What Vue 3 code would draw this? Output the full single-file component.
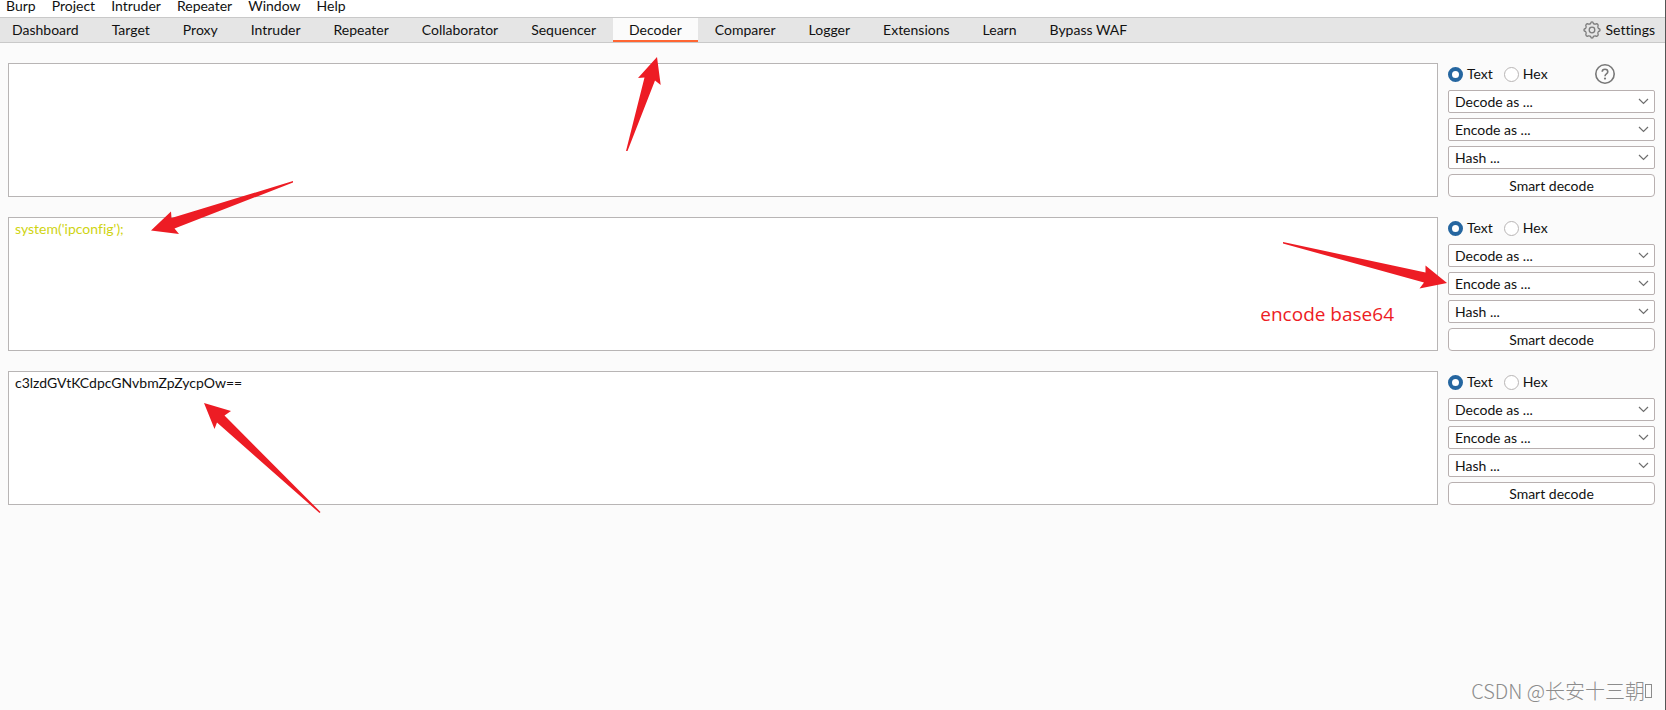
<script setup>
import { ref } from 'vue'

const menus = ['Burp', 'Project', 'Intruder', 'Repeater', 'Window', 'Help']
const tabs = ['Dashboard', 'Target', 'Proxy', 'Intruder', 'Repeater', 'Collaborator', 'Sequencer', 'Decoder', 'Comparer', 'Logger', 'Extensions', 'Learn', 'Bypass WAF']
const active = ref('Decoder')
const choices = ['Decode as ...', 'Encode as ...', 'Hash ...']
const rows = ref([
  { id: 'a', text: '', mode: 'text', help: true },
  { id: 'b', text: "system('ipconfig');", mode: 'text', tinted: true },
  { id: 'c', text: 'c3lzdGVtKCdpcGNvbmZpZycpOw==', mode: 'text' },
])
</script>

<template>
  <div class="window">
    <nav class="menubar" aria-label="Menu">
      <button v-for="m in menus" :key="m" type="button" class="menu">{{ m }}</button>
    </nav>
    <div class="tabbar">
      <div class="tabs" role="tablist">
        <button
          v-for="t in tabs" :key="t" type="button" role="tab" class="tab"
          :class="{ active: t === active }" :aria-selected="t === active" @click="active = t"
        >{{ t }}</button>
      </div>
      <button type="button" class="settings">
        <svg width="18" height="18" viewBox="0 0 18 18" fill="none" stroke="#7b7b7b" stroke-width="1.3" stroke-linejoin="round" aria-hidden="true">
          <path d="M7.6 2.6Q7.8 .9 9 .9T10.4 2.6Q11.6 3.3 12.5 3.1 13.8 2.3 14.7 3.2T14.9 5.4Q14.7 6.4 15.4 7.5 17.1 7.7 17.1 9T15.4 10.5Q14.7 11.5 14.9 12.6 15.7 13.9 14.7 14.8T12.5 14.9Q11.5 14.7 10.4 15.4 10.2 17.1 9 17.1T7.6 15.4Q6.5 14.7 5.5 14.9 4.2 15.7 3.3 14.8T3.1 12.6Q3.3 11.5 2.6 10.5 .9 10.2 .9 9T2.6 7.5Q3.3 6.5 3.1 5.4 2.3 4.1 3.3 3.2T5.5 3.1Q6.5 3.3 7.6 2.6Z" />
          <circle cx="9" cy="9" r="2.8" />
        </svg>
        <span>Settings</span>
      </button>
    </div>

    <main class="decoder">
      <section v-for="row in rows" :key="row.id" class="row">
        <textarea v-model="row.text" class="data" :class="{ tinted: row.tinted }" aria-label="Data" spellcheck="false"></textarea>
        <div class="controls">
          <div class="modes">
            <label class="mode"><input v-model="row.mode" type="radio" value="text" :name="'mode-' + row.id">Text</label>
            <label class="mode"><input v-model="row.mode" type="radio" value="hex" :name="'mode-' + row.id">Hex</label>
            <button v-if="row.help" type="button" class="help" aria-label="Help">
              <svg width="20" height="20" viewBox="0 0 20 20" fill="none" stroke="#777" aria-hidden="true">
                <circle cx="10" cy="10" r="9.2" stroke-width="1.6" />
                <path d="M7.2 7.8C7.2 4.3 12.8 4.3 12.8 7.8 12.8 10 10 9.8 10 12.2" stroke-width="1.6" />
                <circle cx="10" cy="14.6" r="1.1" fill="#777" stroke="none" />
              </svg>
            </button>
          </div>
          <div v-for="c in choices" :key="c" class="pick">
            <select :aria-label="c"><option>{{ c }}</option></select>
            <svg class="chevron" width="11" height="7" viewBox="0 0 11 7" fill="none" stroke="#6e6e6e" stroke-width="1.2" aria-hidden="true"><path d="M1 1l4.5 4.5L10 1" /></svg>
          </div>
          <button type="button" class="smart">Smart decode</button>
        </div>
      </section>
    </main>

    <svg class="arrow to-tab" width="36" height="98" viewBox="626 55 36 98" aria-hidden="true"><path d="M657 57l3.7 28-5.7-4.5-27.5 70.5h-1.5L644.5 77.5 638 78z" /></svg>
    <svg class="arrow to-source" width="146" height="58" viewBox="149 178 146 58" aria-hidden="true"><path d="M151 230.5L171 211.5l.5 6.5L293 181v1.5L174.5 228.5l4.500 5.5z" /></svg>
    <svg class="arrow to-result" width="122" height="114" viewBox="201 401 122 114" aria-hidden="true"><path d="M204 403l27 8-6.5 4.5 96 96.5-1 1-102.5-90.5-2.5 6.5z" /></svg>
    <svg class="arrow to-encode" width="168" height="52" viewBox="1281 239 168 52" aria-hidden="true"><path d="M1283 242l142.500 30.5V265.5L1447 283l-27.5 5.5 4.5-6L1283 243.5z" /></svg>
    <div class="note">encode base64</div>
    <div class="watermark">CSDN @长安十三朝<i class="blank"></i></div>
  </div>
</template>

<style>
body { margin: 0; }
</style>

<style scoped>
.window {
  position: relative;
  box-sizing: border-box;
  min-height: 100vh;
  border-right: 1px solid #555;
  background: #fbfbfb;
  color: #111;
  font: 14px/20px Lato, "Noto Sans CJK SC", sans-serif;
  font-variant-ligatures: none;
  overflow: hidden;
}
button, select, textarea { font: inherit; font-variant-ligatures: none; color: inherit; margin: 0; }
button { border: 0; background: none; padding: 0; }
.menubar { display: flex; gap: 16px; height: 17px; padding-left: 6px; background: #fff; align-items: flex-start; }
.menu { line-height: 12px; }
.tabbar {
  display: flex;
  justify-content: space-between;
  height: 24px;
  border-top: 1px solid #c9c9c9;
  border-bottom: 1px solid #c9c9c9;
  background: #e5e5e5;
}
.tabs { display: flex; gap: 1px; margin-left: -4px; }
.tab { padding: 0 16px; height: 24px; line-height: 24px; }
.tab.active { background: #fbfbfb; box-shadow: inset 0 -2px #ff6633; }
.settings { display: flex; align-items: center; gap: 5px; margin-right: 10px; }
.decoder { display: grid; gap: 20px; padding: 20px 10px 20px 8px; }
.row { display: grid; grid-template-columns: 1fr 207px; gap: 10px; }
.data {
  box-sizing: border-box;
  width: 100%;
  height: 134px;
  padding: 1px 6px;
  border: 1px solid #b8b5b5;
  background: #fff;
  resize: none;
  outline: 0;
  display: block;
}
.data.tinted { color: #cfd411; }
.controls { display: flex; flex-direction: column; gap: 5px; }
.modes { display: flex; align-items: center; height: 22px; gap: 11px; }
.mode { display: flex; align-items: center; gap: 4px; }
.mode input {
  appearance: none;
  box-sizing: border-box;
  width: 15px;
  height: 15px;
  margin: 0;
  border: 1px solid #b8b5b5;
  border-radius: 50%;
  background: #fff;
}
.mode input:checked { border: 4px solid #2566a0; }
.help { display: flex; margin-left: auto; margin-right: 40px; }
.pick { display: grid; align-items: center; }
.pick > * { grid-area: 1 / 1; }
.pick select {
  appearance: none;
  box-sizing: border-box;
  width: 100%;
  height: 23px;
  padding: 0 6px;
  border: 1px solid #b8b0b0;
  border-radius: 2px;
  background: #fff;
}
.chevron { justify-self: end; margin-right: 6px; pointer-events: none; }
.smart { height: 23px; border: 1px solid #b8b0b0; border-radius: 4px; background: #fff; line-height: 20px; }
.arrow { position: absolute; fill: #ed1c24; pointer-events: none; }
.to-tab { left: 626px; top: 55px; }
.to-source { left: 149px; top: 178px; }
.to-result { left: 201px; top: 401px; }
.to-encode { right: 216px; top: 239px; }
.note { position: absolute; right: 271px; top: 300px; color: #ed1c24; font: 19px/28px "Open Sans", sans-serif; }
.watermark {
  position: absolute;
  right: 13px;
  bottom: 5px;
  display: flex;
  align-items: center;
  color: #8c8c8c;
  font: 300 20px/28px "Noto Sans CJK SC", sans-serif;
}
.blank { box-sizing: border-box; width: 7px; height: 14px; border: 1px solid #8c8c8c; }
</style>
